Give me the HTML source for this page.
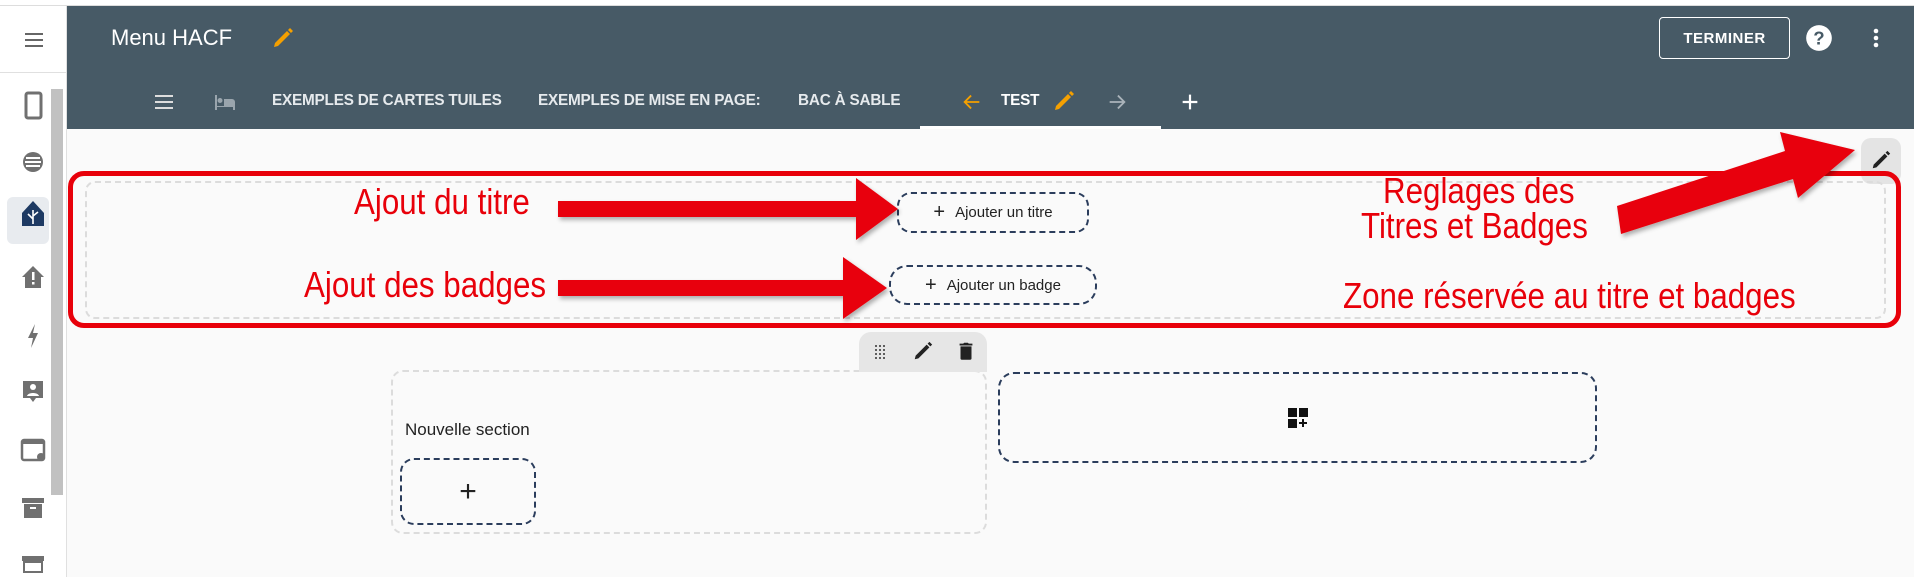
<!DOCTYPE html>
<html><head><meta charset="utf-8"><style>
*{box-sizing:border-box;margin:0;padding:0}
body{width:1914px;height:577px;overflow:hidden;background:#fafafa;font-family:"Liberation Sans",Arial,sans-serif;position:relative}
.a{position:absolute}
.red{color:#e8000a;font-family:"Liberation Sans",sans-serif;white-space:nowrap;transform:scaleX(.87);transform-origin:left center;font-size:36px}
.tab{position:absolute;top:92px;color:#e6eaed;font-size:15.3px;font-weight:bold;white-space:nowrap;letter-spacing:-.2px}
.btn{position:absolute;border:2px dashed #2b3d5c;border-radius:14px;display:flex;align-items:center;justify-content:center;font-size:15px;color:#222}
</style></head><body>
<div class="a" style="left:0;top:0;width:1914px;height:6px;background:#fff;border-bottom:1px solid #ddd"></div>
<!-- sidebar -->
<div class="a" style="left:0;top:6px;width:67px;height:571px;background:#fff;border-right:1px solid #e0e0e0"></div>
<div class="a" style="left:0;top:72px;width:67px;height:1px;background:#e0e0e0"></div>
<svg class="a" style="left:22px;top:28px" width="24" height="24" viewBox="0 0 24 24"><path d="M3 6h18M3 12h18M3 18h18" stroke="#666" stroke-width="2"/></svg>
<div class="a" style="left:51px;top:89px;width:12px;height:406px;background:#c1c1c1"></div>
<div class="a" style="left:7px;top:197px;width:42px;height:47px;background:#e8ebef;border-radius:6px"></div>
<svg class="a" style="left:0;top:80px" width="50" height="497" viewBox="0 80 50 497" fill="#707070">
<rect x="26" y="93" width="15" height="25" rx="2" fill="none" stroke="#707070" stroke-width="3"/>
<circle cx="33" cy="162" r="10"/><path d="M26 158h14M25 162h16M26 166h14" stroke="#fff" stroke-width="2"/>
<path d="M33 201 L44 213 V226 H22 V213Z" fill="#1e3a63"/><path d="M33 210v14M33 219l-5-5M33 216l5-4" stroke="#fff" stroke-width="1.6"/>
<path d="M33 266 L44 277 H41 V288 H25 V277 H22Z"/><rect x="32" y="272" width="2.5" height="8" fill="#fff"/><rect x="32" y="282" width="2.5" height="2.5" fill="#fff"/>
<path d="M35 324 L28 338 H33 L31 348 L38 333 H33Z"/>
<path d="M23 381h20v17h-7l-3 4-3-4h-7z"/><circle cx="33" cy="387" r="3" fill="#fff"/><path d="M27 396c1-4 11-4 12 0z" fill="#fff"/>
<rect x="22" y="440" width="22" height="20" rx="2" fill="none" stroke="#707070" stroke-width="2.5"/><rect x="22" y="440" width="22" height="4"/><circle cx="41" cy="457" r="4"/>
<rect x="22" y="498" width="22" height="5"/><rect x="24" y="504" width="18" height="14"/><rect x="30" y="507" width="6" height="2" fill="#fff"/>
<rect x="22" y="556" width="22" height="5"/><rect x="24" y="562" width="18" height="10" fill="none" stroke="#707070" stroke-width="2"/>
</svg>
<!-- header -->
<div class="a" style="left:67px;top:6px;width:1847px;height:123px;background:#475a66"></div>
<div class="a" style="left:111px;top:25px;color:#fff;font-size:22px">Menu HACF</div>
<svg class="a" style="left:271px;top:26px" width="24" height="24" viewBox="0 0 24 24"><path d="M3 21l1-4L16 5l3 3L7 20z M17 4l2-2 3 3-2 2z" fill="#f5a000"/></svg>
<div class="a" style="left:1659px;top:17px;width:131px;height:42px;border:1px solid #fff;border-radius:4px;color:#fff;font-size:15px;font-weight:bold;display:flex;align-items:center;justify-content:center;letter-spacing:.5px">TERMINER</div>
<svg class="a" style="left:1805px;top:24px" width="28" height="28" viewBox="0 0 24 24"><circle cx="12" cy="12" r="11" fill="#fff"/><text x="12" y="17.5" text-anchor="middle" font-size="16" font-weight="bold" fill="#475a66" font-family="Liberation Sans">?</text></svg>
<svg class="a" style="left:1866px;top:26px" width="20" height="24"><circle cx="10" cy="5" r="2.3" fill="#fff"/><circle cx="10" cy="12" r="2.3" fill="#fff"/><circle cx="10" cy="19" r="2.3" fill="#fff"/></svg>
<svg class="a" style="left:152px;top:90px" width="24" height="24" viewBox="0 0 24 24"><path d="M3 6h18M3 12h18M3 18h18" stroke="#ddd" stroke-width="2"/></svg>
<svg class="a" style="left:212px;top:90px" width="26" height="24" viewBox="0 0 24 24"><path d="M2 5v15h2v-3h16v3h2v-8a3 3 0 0 0-3-3h-8v7H4V5z M7 13a2.5 2.5 0 1 0 0-5 2.5 2.5 0 0 0 0 5" fill="#9aa5ad"/></svg>
<div class="tab" style="left:272px">EXEMPLES DE CARTES TUILES</div>
<div class="tab" style="left:538px">EXEMPLES DE MISE EN PAGE:</div>
<div class="tab" style="left:798px">BAC À SABLE</div>
<svg class="a" style="left:961px;top:91px" width="22" height="22" viewBox="0 0 24 24"><path d="M20 12H5M11 5l-7 7 7 7" stroke="#f5a000" stroke-width="2" fill="none"/></svg>
<div class="tab" style="left:1001px;color:#fff">TEST</div>
<svg class="a" style="left:1052px;top:89px" width="24" height="24" viewBox="0 0 24 24"><path d="M3 21l1-4L16 5l3 3L7 20z M17 4l2-2 3 3-2 2z" fill="#f5a000"/></svg>
<svg class="a" style="left:1106px;top:91px" width="22" height="22" viewBox="0 0 24 24"><path d="M4 12h15M13 5l7 7-7 7" stroke="#aab3ba" stroke-width="2" fill="none"/></svg>
<svg class="a" style="left:1179px;top:91px" width="22" height="22" viewBox="0 0 24 24"><path d="M12 4v16M4 12h16" stroke="#fff" stroke-width="2.4"/></svg>
<div class="a" style="left:920px;top:126px;width:241px;height:3px;background:#fff"></div>
<!-- edit button -->
<div class="a" style="left:1861px;top:138px;width:40px;height:46px;background:#e4e4e4;border-radius:10px"></div>
<svg class="a" style="left:1870px;top:149px" width="22" height="22" viewBox="0 0 24 24"><path d="M3 21l1-4L16 5l3 3L7 20z M17 4l2-2 3 3-2 2z" fill="#222"/></svg>
<!-- zone -->
<div class="a" style="left:85px;top:181px;width:1801px;height:138px;border:2px dashed #dcdcdc;border-radius:10px"></div>
<div class="a" style="left:68px;top:171px;width:1833px;height:157px;border:5px solid #e8000a;border-radius:16px"></div>
<div class="btn" style="left:897px;top:192px;width:192px;height:41px"><span style="font-size:20px;margin-right:10px">+</span>Ajouter un titre</div>
<div class="btn" style="left:889px;top:265px;width:208px;height:40px;border-radius:18px"><span style="font-size:20px;margin-right:10px">+</span>Ajouter un badge</div>
<div class="a red" style="left:354px;top:181px">Ajout du titre</div>
<div class="a red" style="left:304px;top:264px">Ajout des badges</div>
<div class="a red" style="left:1383px;top:170px">Reglages des</div>
<div class="a red" style="left:1361px;top:205px">Titres et Badges</div>
<div class="a red" style="left:1343px;top:275px">Zone réservée au titre et badges</div>
<svg class="a" style="left:0;top:0" width="1914" height="577">
<defs><filter id="s"><feDropShadow dx="2" dy="3" stdDeviation="2" flood-opacity=".3"/></filter></defs>
<g fill="#e8000a" filter="url(#s)">
<path d="M558 201h298v-23l42 31-42 31v-23H558z"/>
<path d="M558 280h285v-23l44 31-44 31v-23H558z"/>
<path d="M1617 206l168-55-5-19 75 18-57 48-5-19-172 55z"/>
</g></svg>
<!-- section -->
<div class="a" style="left:391px;top:370px;width:596px;height:164px;border:2px dashed #dcdcdc;border-radius:12px"></div>
<div class="a" style="left:859px;top:332px;width:128px;height:40px;background:#e6e6e6;border-radius:12px 12px 0 0"></div>
<svg class="a" style="left:874px;top:344px" width="14" height="16"><g fill="#333"><circle cx="2" cy="2" r="1"/><circle cx="6" cy="2" r="1"/><circle cx="10" cy="2" r="1"/><circle cx="2" cy="6" r="1"/><circle cx="6" cy="6" r="1"/><circle cx="10" cy="6" r="1"/><circle cx="2" cy="10" r="1"/><circle cx="6" cy="10" r="1"/><circle cx="10" cy="10" r="1"/><circle cx="2" cy="14" r="1"/><circle cx="6" cy="14" r="1"/><circle cx="10" cy="14" r="1"/></g></svg>
<svg class="a" style="left:912px;top:339px" width="22" height="24" viewBox="0 0 24 24"><path d="M3 21l1-4L16 5l3 3L7 20z M17 4l2-2 3 3-2 2z" fill="#222"/></svg>
<svg class="a" style="left:955px;top:339px" width="22" height="24" viewBox="0 0 24 24"><path d="M6 7h12v13a1.5 1.5 0 0 1-1.5 1.5h-9A1.5 1.5 0 0 1 6 20zM5 4h4l1-1h4l1 1h4v2H5z" fill="#222"/></svg>
<div class="a" style="left:405px;top:420px;font-size:17px;color:#222">Nouvelle section</div>
<div class="btn" style="left:400px;top:458px;width:136px;height:67px"><span style="font-size:30px;font-weight:300">+</span></div>
<div class="btn" style="left:998px;top:372px;width:599px;height:91px;border-radius:16px">
<svg width="24" height="24" viewBox="0 0 24 24"><g fill="#111"><rect x="2" y="2" width="9" height="9"/><rect x="13" y="2" width="9" height="9"/><rect x="2" y="13" width="9" height="9"/><path d="M16 13h2v3h3v2h-3v3h-2v-3h-3v-2h3z"/></g></svg></div>
</body></html>
